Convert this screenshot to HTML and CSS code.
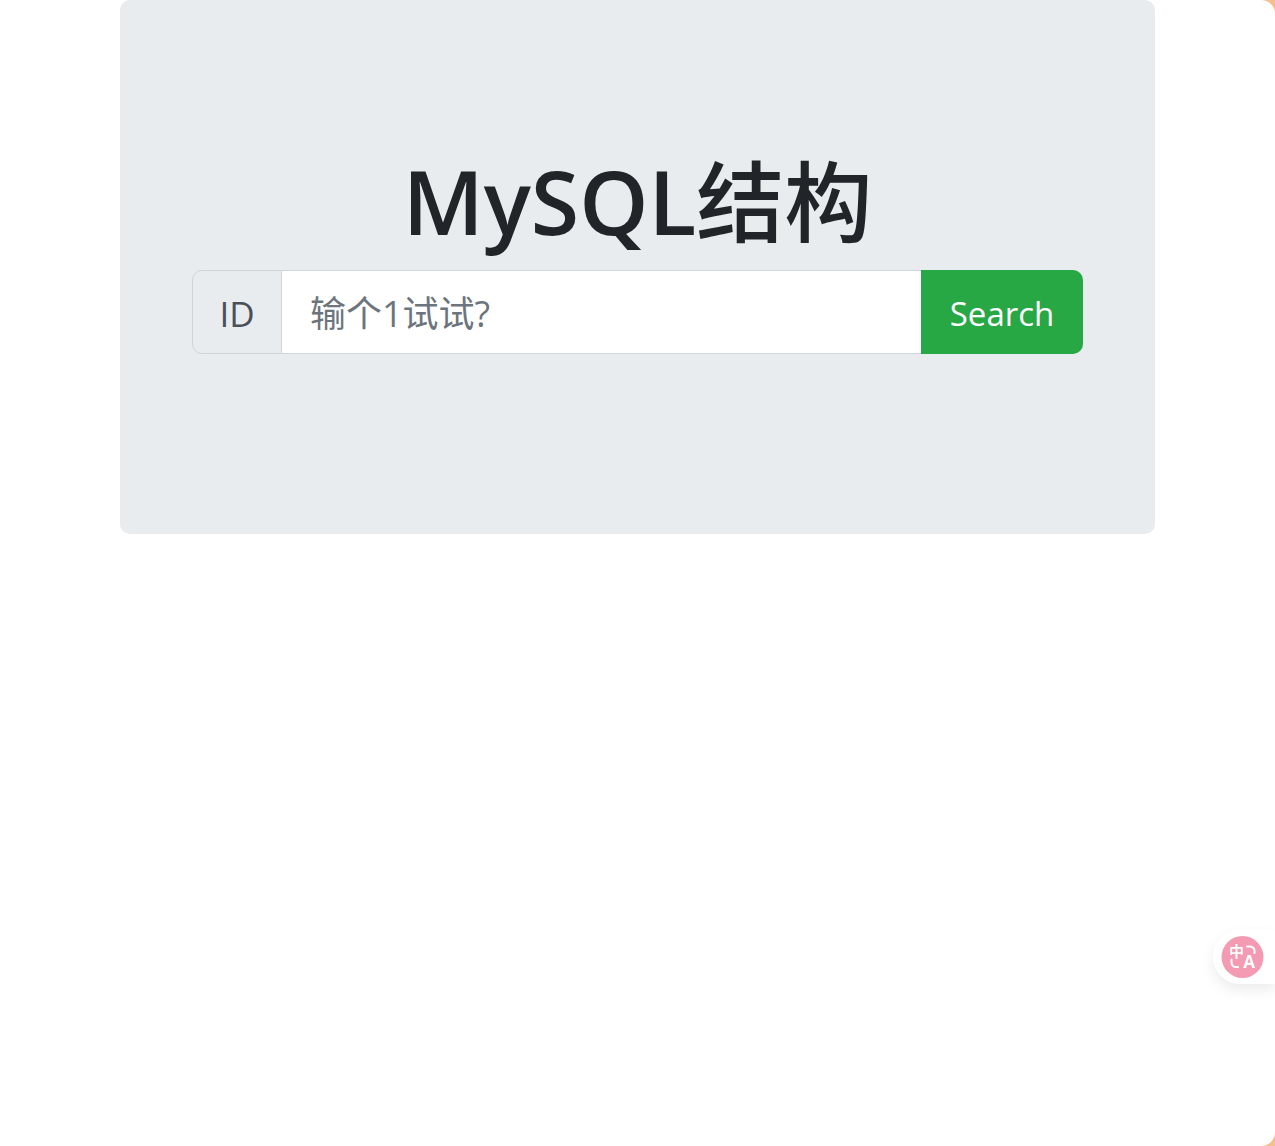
FILE: index.html
```html
<!DOCTYPE html>
<html lang="zh-CN">
<head>
  <meta charset="UTF-8">
  <meta name="viewport" content="width=device-width, initial-scale=1.0">
  <title>MySQL结构</title>
  <link rel="stylesheet" href="styles.css">
</head>
<body>
  <div class="container">
    <div class="jumbotron">
      <h1 class="title">MySQL<span class="title-cn">结构</span></h1>
      <form class="input-group">
        <span class="input-prepend">ID</span>
        <input class="form-control" type="text" placeholder="输个1试试?">
        <button class="search-btn" type="button">Search</button>
      </form>
    </div>
  </div>

  <!-- translate widget -->
  <div class="translate-widget">
    <svg class="translate-icon" viewBox="0 0 42 42" width="42" height="42">
      <circle cx="21.5" cy="21" r="21" fill="#f49ab3"/>
      <text x="15.5" y="21" class="icon-zh">中</text>
      <text x="28" y="32" class="icon-en">A</text>
      <path d="M26 10.5h3a4.5 4.5 0 0 1 4.5 4.5v2" fill="none" stroke="#fff" stroke-width="2" stroke-linecap="round"/>
      <path d="M10.5 23.5v3a4.5 4.5 0 0 0 4.5 4.5h2" fill="none" stroke="#fff" stroke-width="2" stroke-linecap="round"/>
    </svg>
  </div>
</body>
</html>
```
FILE: styles.css
```css
:root{
  --jumbo-bg: #e9ecef;
  --text-dark: #212529;
  --text-muted: #495057;
  --border: #ced4da;
  --green: #28a745;
  --corner: #f4c08e;
}
* {
  box-sizing: border-box;
  font-family: "Open Sans", "Noto Sans CJK SC", sans-serif;
}
html{
  /* the orange only shows through the rounded corners on the right */
  background: linear-gradient(to right, #fff 50%, var(--corner) 50%);
}
body{
  margin: 0;
  min-height: 1146px;
  background-color: #fff;
  border-radius: 0 14px 14px 0;
}
.container{
  padding: 0 120px;
}
.jumbotron{
  height: 534px;
  padding: 150px 72px 0;
  background-color: var(--jumbo-bg);
  border-radius: 10px;
}
.title{
  margin: 0;
  height: 120px;
  line-height: 102px;
  font-size: 88px;
  font-weight: 600;
  text-align: center;
  color: var(--text-dark);
}
.title-cn{
  font-weight: 500;
}
.input-group{
  display: flex;
  height: 84px;
}
.input-prepend{
  display: flex;
  align-items: center;
  justify-content: center;
  width: 90px;
  padding-top: 2px;
  font-size: 35px;
  color: var(--text-muted);
  background-color: var(--jumbo-bg);
  border: 1px solid var(--border);
  border-radius: 10px 0 0 10px;
}
.form-control{
  flex: 1;
  min-width: 0;
  padding: 2px 28px 0;
  font-size: 36px;
  color: var(--text-muted);
  background-color: #fff;
  border: 1px solid var(--border);
  border-left: none;
  border-right: none;
  outline: none;
}
.form-control::placeholder{
  color: #6c757d;
  opacity: 1;
}
.search-btn{
  width: 162px;
  padding: 3px 0 0;
  font-size: 33px;
  color: #fff;
  background-color: var(--green);
  border: none;
  border-radius: 0 10px 10px 0;
}
.translate-widget{
  position: fixed;
  right: 0;
  top: 930px;
  width: 62px;
  height: 54px;
  padding: 6px 0 0 8px;
  background-color: #fff;
  border-radius: 27px 0 0 27px;
  box-shadow: 0 6px 14px rgba(0, 0, 0, 0.08);
}
.translate-icon{
  display: block;
  overflow: visible;
}
.icon-zh{
  font-size: 15px;
  font-weight: 700;
  fill: #fff;
  text-anchor: middle;
}
.icon-en{
  font-size: 17px;
  font-weight: 700;
  fill: #fff;
  text-anchor: middle;
}
```
